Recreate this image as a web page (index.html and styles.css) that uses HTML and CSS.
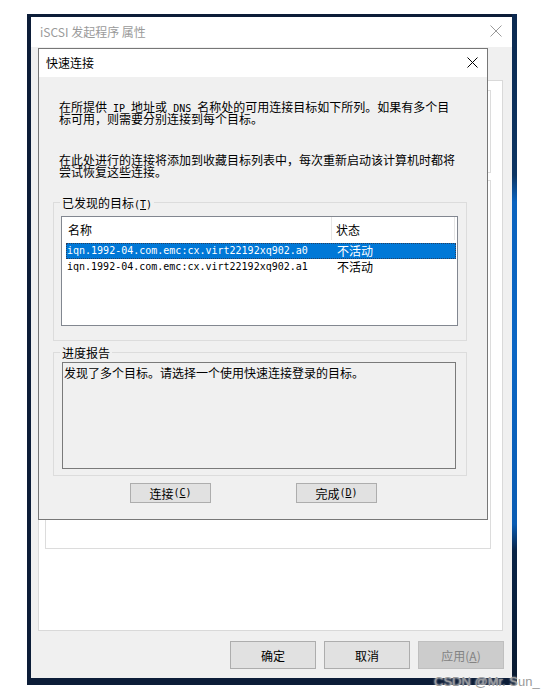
FILE: index.html
```html
<!DOCTYPE html>
<html>

<head>
    <meta charset="utf-8" />
    <title>iSCSI 发起程序 属性</title>
    <link rel="stylesheet" href="styles.css">
</head>

<body>
    <div class="frame">
        <div class="window">
            <!-- Property sheet title bar (inactive) -->
            <div class="window-title">
                <span>iSCSI 发起程序 属性</span>
                <svg class="close-icon" width="12" height="12" viewBox="0 0 12 12">
                    <path d="M0.5 0.5L11.5 11.5M11.5 0.5L0.5 11.5" stroke="#9a9a9a" stroke-width="1" fill="none" />
                </svg>
            </div>
            <div class="window-body">
                <div class="tab-panel">
                    <div class="box box-top"></div>
                    <div class="box box-bottom"></div>
                </div>
                <div class="button-row">
                    <span class="button">确定</span>
                    <span class="button">取消</span>
                    <span class="button disabled">应用(<u>A</u>)</span>
                </div>
            </div>

            <!-- Quick connect dialog -->
            <div class="dialog">
                <div class="dialog-title">
                    <span>快速连接</span>
                    <svg class="close-icon" width="11" height="11" viewBox="0 0 11 11">
                        <path d="M0.5 0.5L10.5 10.5M10.5 0.5L0.5 10.5" stroke="#000" stroke-width="1" fill="none" />
                    </svg>
                </div>
                <div class="dialog-body">
                    <div class="note">在所提供<span class="mono"> IP </span>地址或<span class="mono"> DNS </span>名称处的可用连接目标如下所列。如果有多个目<br>标可用，则需要分别连接到每个目标。</div>
                    <div class="note note-second">在此处进行的连接将添加到收藏目标列表中，每次重新启动该计算机时都将<br>尝试恢复这些连接。</div>

                    <!--Discovered targets-->
                    <div class="group group-targets">
                        <div class="group-label">已发现的目标<span class="mono">(<u>T</u>)</span></div>
                        <div class="list-view">
                            <div class="list-header">
                                <span class="head-cell head-name">名称</span>
                                <span class="head-cell head-status">状态</span>
                            </div>
                            <div class="list-row selected">
                                <span class="cell-name mono">iqn.1992-04.com.emc:cx.virt22192xq902.a0</span>
                                <span class="cell-status">不活动</span>
                            </div>
                            <div class="list-row">
                                <span class="cell-name mono">iqn.1992-04.com.emc:cx.virt22192xq902.a1</span>
                                <span class="cell-status">不活动</span>
                            </div>
                        </div>
                    </div>

                    <!--Progress report-->
                    <div class="group group-report">
                        <div class="group-label">进度报告</div>
                        <div class="report-box">发现了多个目标。请选择一个使用快速连接登录的目标。</div>
                    </div>

                    <div class="dialog-buttons">
                        <span class="dialog-button">连接<span class="mono">(<u>C</u>)</span></span>
                        <span class="dialog-button">完成<span class="mono">(<u>D</u>)</span></span>
                    </div>
                </div>
            </div>
        </div>
    </div>
    <div class="watermark">CSDN @Mr. Sun_</div>
</body>

</html>
```

FILE: styles.css
```css
* {
    margin: 0;
    padding: 0;
    box-sizing: border-box;
}

body {
    background: #fff;
    font-family: "Noto Sans CJK SC", sans-serif;
    font-size: 12px;
    color: #000;
}

.mono {
    font-family: "DejaVu Sans Mono", "Liberation Mono", monospace;
    font-size: 10px;
    line-height: 8px;
}

/* dark window frame, desktop blue showing on the right edge */
.frame {
    width: 490px;
    height: 671px;
    margin: 14px 0 0 27px;
    padding: 3px 5px 7px 4px;
    background:
        linear-gradient(#0c2a50 0%, #0d3563 24%, #0a63bf 28%, #0b66c4 50%, #0a5cb3 76%, #0a2446 80%, #08192f 100%) right top / 5px 100% no-repeat,
        #0c1d38;
}

.window {
    position: relative;
    height: 100%;
    background: #f0f0f0;
}

.window-title {
    height: 30px;
    background: #fff;
    display: flex;
    align-items: center;
    justify-content: space-between;
    padding: 0 10px 2px 9px;
    color: #9a9a9a;
}

.close-icon {
    display: block;
}

.tab-panel {
    margin: 33px 0 0 7px;
    width: 465px;
    height: 551px;
    background: #fff;
    border: 1px solid #d9d9d9;
    padding: 9px 0 0 6px;
}

.box {
    width: 446px;
    border: 1px solid #dcdcdc;
}

.box-top {
    height: 83px;
}

.box-bottom {
    height: 369px;
    margin-top: 7px;
}

.button-row {
    display: flex;
    justify-content: flex-end;
    gap: 8px;
    padding-right: 8px;
    margin-top: 10px;
}

.button {
    width: 86px;
    height: 28px;
    border: 1px solid #adadad;
    background: #e1e1e1;
    display: flex;
    align-items: center;
    justify-content: center;
}

.button.disabled {
    background: #cccccc;
    border-color: #bfbfbf;
    color: #838383;
}

/* modal dialog */
.dialog {
    position: absolute;
    left: 7px;
    top: 31px;
    width: 450px;
    height: 472px;
    border: 1px solid #777;
    background: #f0f0f0;
}

.dialog-title {
    height: 28px;
    background: #fff;
    display: flex;
    align-items: center;
    justify-content: space-between;
    padding: 0 9px 2px 7px;
}

.dialog-body {
    padding: 24px 20px 0 14px;
}

.note {
    margin-left: 6px;
    height: 24px;
    line-height: 12px;
    white-space: nowrap;
}

.note-second {
    margin-top: 29px;
}

.group {
    border: 1px solid #dcdcdc;
}

.group-label {
    display: table;
    height: 13px;
    margin: -7px 0 0 6px;
    padding: 0 2px;
    line-height: 13px;
    background: #f0f0f0;
    white-space: nowrap;
}

.group-targets {
    margin-top: 24px;
    height: 139px;
}

.group-report {
    margin-top: 11px;
    height: 124px;
}

.list-view {
    margin: 7px 8px 0 7px;
    height: 110px;
    border: 1px solid #828790;
    background: #fff;
}

.list-header {
    display: flex;
    height: 26px;
}

.head-cell {
    height: 23px;
    line-height: 20px;
    padding-top: 3px;
    border-right: 1px solid #e5e5e5;
}

.head-name {
    width: 270px;
    padding-left: 6px;
}

.head-status {
    width: 123px;
    padding-left: 4px;
}

.list-row {
    display: flex;
    align-items: center;
    width: 390px;
    height: 16px;
    margin-left: 4px;
    line-height: 14px;
    border: 1px solid transparent;
}

.list-row.selected {
    background: #0078d7;
    color: #fff;
    border: 1px dotted #2a3f5e;
}

.cell-name {
    width: 265px;
    white-space: nowrap;
    line-height: 14px;
}

.cell-status {
    padding-left: 5px;
}

.report-box {
    margin: 3px 10px 0 8px;
    height: 107px;
    border: 1px solid #7a7a7a;
    background: #f0f0f0;
    padding: 3px 1px;
    line-height: 13px;
}

.dialog-buttons {
    display: flex;
    gap: 85px;
    padding-left: 77px;
    margin-top: 7px;
}

.dialog-button {
    width: 81px;
    height: 20px;
    border: 1px solid #adadad;
    background: #e1e1e1;
    display: flex;
    align-items: center;
    justify-content: center;
    white-space: nowrap;
}

.watermark {
    position: absolute;
    left: 434px;
    top: 674px;
    font-family: "Liberation Sans", sans-serif;
    font-size: 13px;
    color: #9a9a9a;
    text-shadow: 0 0 2px #fff;
}
```
